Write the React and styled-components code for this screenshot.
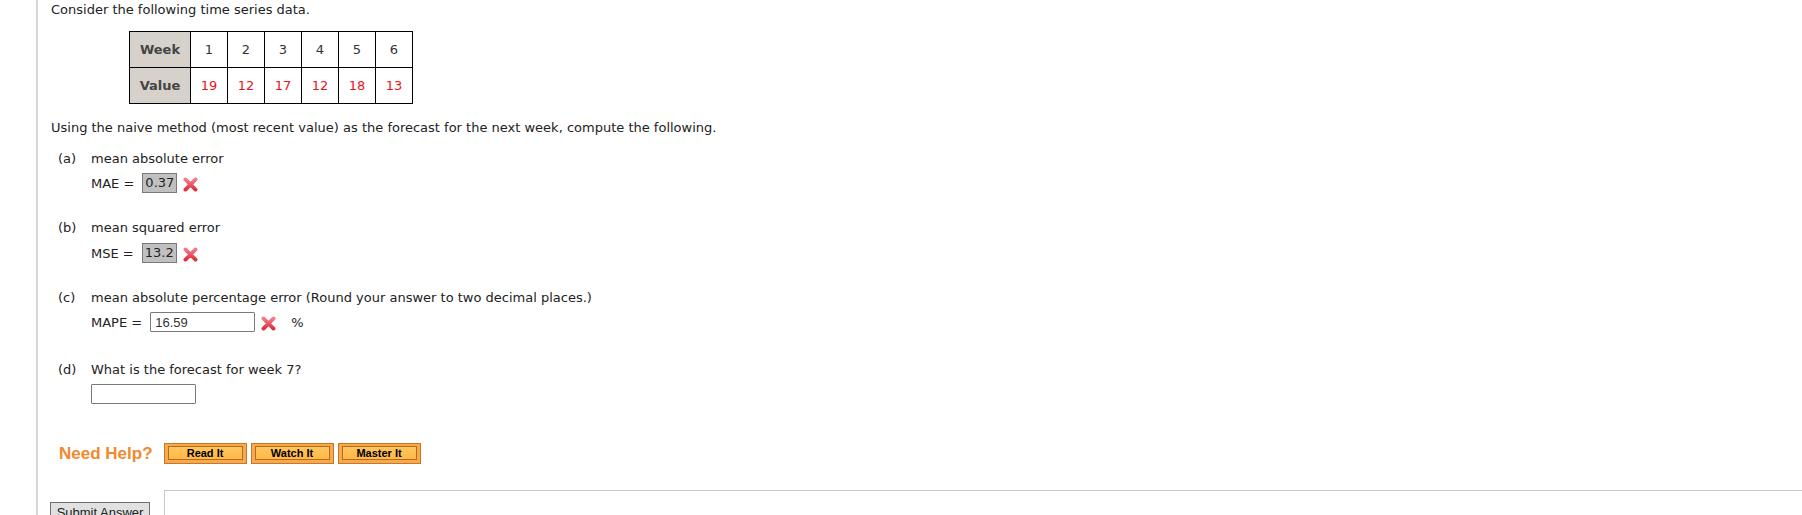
import React from "react"
import styled, { createGlobalStyle } from "styled-components"

const weeks = [1, 2, 3, 4, 5, 6]
const values = [19, 12, 17, 12, 18, 13]
const helpButtons = ["Read It", "Watch It", "Master It"]

const GlobalStyle = createGlobalStyle`
  html, body {
    margin: 0;
    padding: 0;
    background: #fff;
  }
  body {
    font-family: "DejaVu Sans", Verdana, sans-serif;
    font-size: 13px;
    color: #222;
  }
`

const WrongMark = () => (
  <Mark viewBox="0 0 14 14" aria-label="incorrect">
    <defs>
      <linearGradient id="xg" x1="0" y1="0" x2="0" y2="1">
        <stop offset="0" stopColor="#f47c88" />
        <stop offset="1" stopColor="#de3042" />
      </linearGradient>
    </defs>
    <path
      d="M2.3 2.3 L11.7 11.7 M11.7 2.3 L2.3 11.7"
      stroke="url(#xg)"
      strokeWidth="3.6"
      strokeLinecap="round"
      fill="none"
    />
  </Mark>
)

const App = () => {
  return (
    <Page>
      <GlobalStyle />
      <Question>
        <Text>Consider the following time series data.</Text>
        <DataTable>
          <tbody>
            <tr>
              <HeadCell>Week</HeadCell>
              {weeks.map((w) => (
                <Cell key={w}>{w}</Cell>
              ))}
            </tr>
            <tr>
              <HeadCell>Value</HeadCell>
              {values.map((v, i) => (
                <Cell key={i} red>
                  {v}
                </Cell>
              ))}
            </tr>
          </tbody>
        </DataTable>
        <Text top={16}>
          Using the naive method (most recent value) as the forecast for the next week, compute the following.
        </Text>

        <Part gap={15}>
          <Label>(a)</Label>
          <Text>mean absolute error</Text>
          <AnswerRow>
            <span>MAE =</span>
            <Graded>0.37</Graded>
            <WrongMark />
          </AnswerRow>
        </Part>

        <Part gap={27}>
          <Label>(b)</Label>
          <Text>mean squared error</Text>
          <AnswerRow drop={1}>
            <span>MSE =</span>
            <Graded>13.2</Graded>
            <WrongMark />
          </AnswerRow>
        </Part>

        <Part gap={27}>
          <Label>(c)</Label>
          <Text>mean absolute percentage error (Round your answer to two decimal places.)</Text>
          <AnswerRow>
            <span>MAPE =</span>
            <Input defaultValue="16.59" />
            <WrongMark />
            <Unit>%</Unit>
          </AnswerRow>
        </Part>

        <Part gap={30}>
          <Label>(d)</Label>
          <Text>What is the forecast for week 7?</Text>
          <AnswerRow>
            <Input defaultValue="" />
          </AnswerRow>
        </Part>

        <HelpRow>
          <HelpLabel>Need Help?</HelpLabel>
          {helpButtons.map((b) => (
            <HelpButton key={b}>
              <span>{b}</span>
            </HelpButton>
          ))}
        </HelpRow>

        <BottomRow>
          <SubmitButton>Submit Answer</SubmitButton>
          <NotesBox />
        </BottomRow>
      </Question>
    </Page>
  )
}

const Page = styled.div`
  height: 515px;
  overflow: hidden;
  padding-left: 36px;
`

const Question = styled.div`
  min-height: 515px;
  border-left: 2px solid #d6d6d6;
  padding: 2px 0 0 13px;
`

const Text = styled.div`
  line-height: 16px;
  margin: ${({ top }) => (top ? `${top}px` : "0")} 0 0;
`

const DataTable = styled.table`
  margin: 13px 0 0 78px;
  border-collapse: collapse;
  border: 1px solid #000;
`

const HeadCell = styled.td`
  width: 61px;
  height: 35px;
  padding: 0;
  box-sizing: border-box;
  text-align: center;
  font-weight: bold;
  color: #444;
  background: #d6d2cb;
  border: 1px solid #000;
`

const Cell = styled.td`
  width: 36px;
  height: 35px;
  padding: 0;
  text-align: center;
  color: ${({ red }) => (red ? "#e8141c" : "#333")};
  border: 1px solid #000;
`

const Part = styled.div`
  display: grid;
  grid-template-columns: 33px 1fr;
  row-gap: 6px;
  padding-left: 7px;
  margin-top: ${({ gap }) => gap}px;
  > *:not(:first-child) {
    grid-column: 2;
  }
`

const Label = styled.div`
  line-height: 16px;
  grid-row: 1;
`

const AnswerRow = styled.div`
  display: flex;
  align-items: center;
  height: 20px;
  margin-top: ${({ drop }) => drop || 0}px;
  > span:first-child {
    margin-right: 8px;
  }
`

const Graded = styled.span`
  display: inline-block;
  height: 18px;
  line-height: 18px;
  padding: 0 2px;
  background: #c0c0c0;
  border: 1px solid #7a7a7a;
  color: #222;
`

const Input = styled.input`
  width: 105px;
  height: 20px;
  box-sizing: border-box;
  border: 1px solid #7a7a7a;
  border-radius: 1px;
  padding: 0 4px;
  font-family: "Liberation Sans", Arial, sans-serif;
  font-size: 13px;
  color: #333;
  background: #fff;
  outline: none;
`

const Mark = styled.svg`
  width: 15px;
  height: 15px;
  margin-left: 6px;
  margin-top: 3px;
`

const Unit = styled.span`
  margin-left: 15px;
`

const HelpRow = styled.div`
  display: flex;
  align-items: center;
  gap: 4px;
  margin-top: 39px;
  padding-left: 8px;
`

const HelpLabel = styled.span`
  font-family: "Liberation Sans", Arial, sans-serif;
  font-weight: bold;
  font-size: 17px;
  color: #f08a2c;
  margin-right: 7px;
`

const HelpButton = styled.div`
  width: 83px;
  height: 21px;
  box-sizing: border-box;
  padding: 2px 3px 3px;
  border: 1px solid #c4782e;
  background: #f9a84a;
  span {
    display: flex;
    align-items: center;
    justify-content: center;
    height: 100%;
    box-sizing: border-box;
    border: 1px solid #b46a24;
    background: linear-gradient(#ffc65e, #ffb948);
    font-family: "Liberation Sans", Arial, sans-serif;
    font-weight: bold;
    font-size: 11px;
    color: #000;
  }
`

const BottomRow = styled.div`
  display: flex;
  align-items: flex-start;
  gap: 14px;
  margin-top: 26px;
  margin-left: -1px;
`

const SubmitButton = styled.button`
  width: 100px;
  height: 24px;
  margin-top: 12px;
  padding: 0 0 4px;
  font-family: "Liberation Sans", Arial, sans-serif;
  font-size: 13px;
  line-height: 15px;
  color: #222;
  background: #e1e1e1;
  border: 1px solid #707070;
`

const NotesBox = styled.div`
  flex: 1;
  height: 60px;
  border: 1px solid #c8c8c8;
  border-right: none;
  background: #fff;
`

export default App
